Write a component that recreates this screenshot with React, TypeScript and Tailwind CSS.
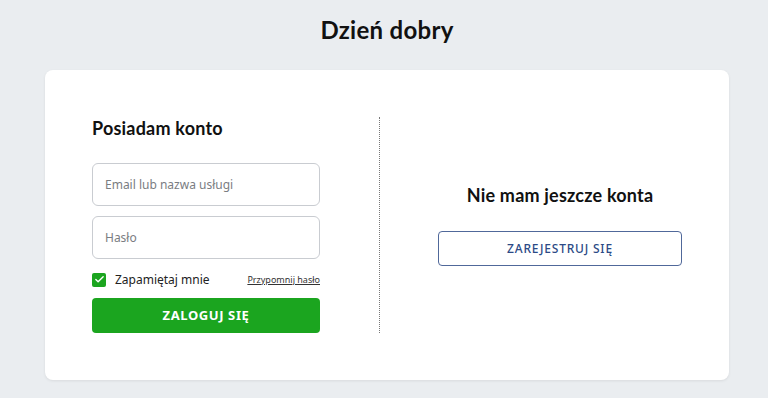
import { Check } from "lucide-react";

export default function App() {
  return (
    <div className="min-h-[398px] bg-[#eaedf0] font-['Noto_Sans',sans-serif] text-[#111]">
      <div className="ml-[45px] w-[684px]">
        <h1 className="pt-[14px] text-center font-['Lato',sans-serif] text-[24px] font-bold leading-[32px] tracking-[0.3px]">
          Dzień dobry
        </h1>

        <div className="mt-[24px] flex rounded-[8px] bg-white px-[47px] py-[47px] shadow-[0_1px_3px_rgba(0,0,0,0.08)]">
          {/* logowanie */}
          <div className="w-[228px]">
            <h2 className="font-['Lato',sans-serif] text-[18px] font-bold leading-[23px] tracking-[0.2px]">
              Posiadam konto
            </h2>

            <input
              className="mt-[23px] h-[43px] w-full rounded-[6px] border border-[#c9ccd1] px-[12px] text-[12px] outline-none placeholder:text-[#7a7d82]"
              placeholder="Email lub nazwa usługi"
            />
            <input
              type="password"
              className="mt-[10px] h-[43px] w-full rounded-[6px] border border-[#c9ccd1] px-[12px] text-[12px] outline-none placeholder:text-[#7a7d82]"
              placeholder="Hasło"
            />

            <div className="mt-[14px] flex h-[13px] items-center justify-between">
              <label className="flex items-center gap-[9px] text-[12px] text-[#222]">
                <span className="flex h-[14px] w-[14px] items-center justify-center rounded-[2px] bg-[#1ba51f]">
                  <Check className="h-[11px] w-[11px] text-white" strokeWidth={3} />
                </span>
                Zapamiętaj mnie
              </label>
              <a className="text-[9px] text-[#333] underline">Przypomnij hasło</a>
            </div>

            <button className="mt-[12px] h-[35px] w-full rounded-[4px] bg-[#1ba51f] text-[13px] font-bold tracking-[0.6px] text-white">
              ZALOGUJ SIĘ
            </button>
          </div>

          <div className="ml-[59px] mr-[58px] border-l border-dotted border-[#777]" />

          {/* rejestracja */}
          <div className="flex flex-1 flex-col items-center justify-center">
            <h2 className="font-['Lato',sans-serif] text-[18px] font-bold leading-[23px] tracking-[0.2px]">
              Nie mam jeszcze konta
            </h2>
            <button className="mt-[24px] h-[35px] w-full rounded-[4px] border border-[#50689a] text-[12px] font-medium tracking-[0.8px] text-[#2c4a86]">
              ZAREJESTRUJ SIĘ
            </button>
          </div>
        </div>
      </div>
    </div>
  );
}
